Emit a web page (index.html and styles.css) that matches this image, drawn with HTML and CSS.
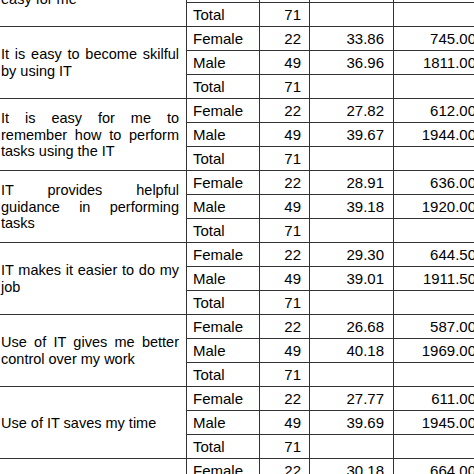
FILE: index.html
```html
<!DOCTYPE html>
<html lang="en">
<head>
<meta charset="utf-8">
<title>Mann-Whitney ranks by gender</title>
<link rel="stylesheet" href="styles.css">
</head>
<body>
<div class="sheet">
  <div class="label"><div>Learning to operate IT is easy for me</div></div>
  <div class="grp">Female</div><div class="num n">22</div><div class="num m">29.09</div><div class="num s">640.00</div>
  <div class="grp">Male</div><div class="num n">49</div><div class="num m">39.10</div><div class="num s">1916.00</div>
  <div class="grp">Total</div><div class="num n">71</div><div class="num m"></div><div class="num s"></div>

  <div class="label"><div>It is easy to become skilful by using IT</div></div>
  <div class="grp">Female</div><div class="num n">22</div><div class="num m">33.86</div><div class="num s">745.00</div>
  <div class="grp">Male</div><div class="num n">49</div><div class="num m">36.96</div><div class="num s">1811.00</div>
  <div class="grp">Total</div><div class="num n">71</div><div class="num m"></div><div class="num s"></div>

  <div class="label"><div>It is easy for me to remember how to perform tasks using the IT</div></div>
  <div class="grp">Female</div><div class="num n">22</div><div class="num m">27.82</div><div class="num s">612.00</div>
  <div class="grp">Male</div><div class="num n">49</div><div class="num m">39.67</div><div class="num s">1944.00</div>
  <div class="grp">Total</div><div class="num n">71</div><div class="num m"></div><div class="num s"></div>

  <div class="label"><div>IT provides helpful guidance in performing tasks</div></div>
  <div class="grp">Female</div><div class="num n">22</div><div class="num m">28.91</div><div class="num s">636.00</div>
  <div class="grp">Male</div><div class="num n">49</div><div class="num m">39.18</div><div class="num s">1920.00</div>
  <div class="grp">Total</div><div class="num n">71</div><div class="num m"></div><div class="num s"></div>

  <div class="label"><div>IT makes it easier to do my job</div></div>
  <div class="grp">Female</div><div class="num n">22</div><div class="num m">29.30</div><div class="num s">644.50</div>
  <div class="grp">Male</div><div class="num n">49</div><div class="num m">39.01</div><div class="num s">1911.50</div>
  <div class="grp">Total</div><div class="num n">71</div><div class="num m"></div><div class="num s"></div>

  <div class="label"><div>Use of IT gives me better control over my work</div></div>
  <div class="grp">Female</div><div class="num n">22</div><div class="num m">26.68</div><div class="num s">587.00</div>
  <div class="grp">Male</div><div class="num n">49</div><div class="num m">40.18</div><div class="num s">1969.00</div>
  <div class="grp">Total</div><div class="num n">71</div><div class="num m"></div><div class="num s"></div>

  <div class="label"><div>Use of IT saves my time</div></div>
  <div class="grp">Female</div><div class="num n">22</div><div class="num m">27.77</div><div class="num s">611.00</div>
  <div class="grp">Male</div><div class="num n">49</div><div class="num m">39.69</div><div class="num s">1945.00</div>
  <div class="grp">Total</div><div class="num n">71</div><div class="num m"></div><div class="num s"></div>

  <div class="label"><div>I find IT useful in my job</div></div>
  <div class="grp">Female</div><div class="num n">22</div><div class="num m">30.18</div><div class="num s">664.00</div>
  <div class="grp">Male</div><div class="num n">49</div><div class="num m">38.61</div><div class="num s">1892.00</div>
  <div class="grp">Total</div><div class="num n">71</div><div class="num m"></div><div class="num s"></div>
</div>
</body>
</html>
```
FILE: styles.css
```css
html, body {
  margin: 0;
  padding: 0;
  overflow: hidden;
  background: #ffffff;
}

body {
  font-family: "Liberation Sans", Arial, Helvetica, sans-serif;
  color: #000000;
}

.sheet {
  display: grid;
  grid-template-columns: 186px 72px 49px 83px 90px;
  grid-auto-rows: 23px;
  gap: 1px;
  width: max-content;
  margin-top: -45px;
  background: #333333;
}

.sheet > div {
  background: #ffffff;
}

.label {
  grid-row: span 3;
  grid-column: 1;
  display: flex;
  flex-direction: column;
  justify-content: center;
  padding: 1px 7px 0 1px;
  font-size: 14.5px;
  line-height: 16.7px;
  text-align: justify;
}

.grp,
.num {
  display: flex;
  align-items: center;
  font-size: 15px;
  line-height: 17px;
}

.grp {
  padding-left: 6px;
}

.num {
  justify-content: flex-end;
}

.n {
  padding-right: 8px;
}

.m {
  padding-right: 9px;
}

.s {
  padding-right: 8px;
}
```
